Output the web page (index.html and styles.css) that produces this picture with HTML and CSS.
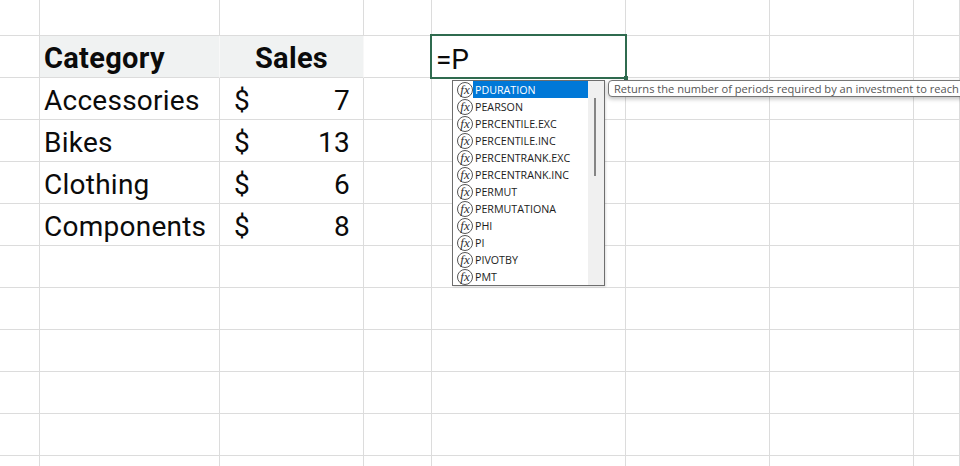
FILE: index.html
```html
<!DOCTYPE html>
<html lang="en">
<head>
<meta charset="utf-8">
<title>Sheet</title>
<link rel="stylesheet" href="styles.css">
</head>
<body>
<main class="sheet">
  <table class="grid">
    <colgroup>
      <col class="c-a"><col class="c-b"><col class="c-c"><col class="c-d"><col class="c-e"><col class="c-f"><col class="c-f"><col class="c-h">
    </colgroup>
    <tbody>
      <tr class="first"><td></td><td></td><td></td><td></td><td></td><td></td><td></td><td></td></tr>
      <tr><td></td><td class="head">Category</td><td class="head center">Sales</td><td></td><td></td><td></td><td></td><td></td></tr>
      <tr><td></td><td class="text">Accessories</td><td class="money"><div class="acct"><span>$</span><span>7</span></div></td><td></td><td></td><td></td><td></td><td></td></tr>
      <tr><td></td><td class="text">Bikes</td><td class="money"><div class="acct"><span>$</span><span>13</span></div></td><td></td><td></td><td></td><td></td><td></td></tr>
      <tr><td></td><td class="text">Clothing</td><td class="money"><div class="acct"><span>$</span><span>6</span></div></td><td></td><td></td><td></td><td></td><td></td></tr>
      <tr><td></td><td class="text">Components</td><td class="money"><div class="acct"><span>$</span><span>8</span></div></td><td></td><td></td><td></td><td></td><td></td></tr>
      <tr><td></td><td></td><td></td><td></td><td></td><td></td><td></td><td></td></tr>
      <tr><td></td><td></td><td></td><td></td><td></td><td></td><td></td><td></td></tr>
      <tr><td></td><td></td><td></td><td></td><td></td><td></td><td></td><td></td></tr>
      <tr><td></td><td></td><td></td><td></td><td></td><td></td><td></td><td></td></tr>
      <tr><td></td><td></td><td></td><td></td><td></td><td></td><td></td><td></td></tr>
      <tr><td></td><td></td><td></td><td></td><td></td><td></td><td></td><td></td></tr>
    </tbody>
  </table>

  <div class="editor">=P<span class="handle"></span></div>

  <div class="autocomplete">
    <ul class="fn-list">
      <li class="fn selected"><i class="fx">fx</i><span class="fn-name">PDURATION</span></li>
      <li class="fn"><i class="fx">fx</i><span class="fn-name">PEARSON</span></li>
      <li class="fn"><i class="fx">fx</i><span class="fn-name">PERCENTILE.EXC</span></li>
      <li class="fn"><i class="fx">fx</i><span class="fn-name">PERCENTILE.INC</span></li>
      <li class="fn"><i class="fx">fx</i><span class="fn-name">PERCENTRANK.EXC</span></li>
      <li class="fn"><i class="fx">fx</i><span class="fn-name">PERCENTRANK.INC</span></li>
      <li class="fn"><i class="fx">fx</i><span class="fn-name">PERMUT</span></li>
      <li class="fn"><i class="fx">fx</i><span class="fn-name">PERMUTATIONA</span></li>
      <li class="fn"><i class="fx">fx</i><span class="fn-name">PHI</span></li>
      <li class="fn"><i class="fx">fx</i><span class="fn-name">PI</span></li>
      <li class="fn"><i class="fx">fx</i><span class="fn-name">PIVOTBY</span></li>
      <li class="fn"><i class="fx">fx</i><span class="fn-name">PMT</span></li>
    </ul>
    <div class="scrollbar"><div class="thumb"></div></div>
  </div>

  <div class="tooltip">Returns the number of periods required by an investment to reach</div>
</main>
</body>
</html>
```
FILE: styles.css
```css
html, body {
  margin: 0;
  padding: 0;
  width: 960px;
  height: 466px;
  overflow: hidden;
  background: #fff;
}

.sheet {
  position: relative;
  width: 960px;
  height: 466px;
  overflow: hidden;
  font-family: Roboto, "Liberation Sans", sans-serif;
  color: #0b0b0b;
}

.grid {
  border-collapse: separate;
  border-spacing: 0;
  table-layout: fixed;
  width: 960px;
}

.c-a { width: 40px; }
.c-b { width: 180px; }
.c-c { width: 144px; }
.c-d { width: 68px; }
.c-e { width: 194px; }
.c-f { width: 144px; }
.c-h { width: 46px; }

tr { height: 42px; }
tr.first { height: 36px; }

td {
  box-sizing: border-box;
  padding: 0;
  border-right: 1px solid #dcdcdc;
  border-bottom: 1px solid #dcdcdc;
  font-size: 28px;
  line-height: 37px;
  white-space: nowrap;
  letter-spacing: .25px;
}

.head {
  background: #f0f2f2;
  border-right-color: #f8f8f8;
  font-size: 29px;
  font-weight: 700;
  letter-spacing: .3px;
  padding: 4px 0 0 4px;
}

.center {
  padding-left: 0;
  text-align: center;
}

.text { padding: 4px 0 0 4px; }

.money { padding: 4px 13px 0 14px; }

.acct {
  display: flex;
  justify-content: space-between;
}

.editor {
  position: absolute;
  left: 430px;
  top: 34px;
  box-sizing: border-box;
  width: 197px;
  height: 45px;
  padding-left: 4px;
  border: 2px solid #2f6b4f;
  background: #fff;
  font-size: 28px;
  line-height: 48px;
}

.handle {
  position: absolute;
  right: -3px;
  bottom: -3px;
  width: 4px;
  height: 4px;
  background: #2f6b4f;
}

.autocomplete {
  position: absolute;
  left: 452px;
  top: 80px;
  box-sizing: border-box;
  width: 153px;
  height: 206px;
  display: flex;
  background: #fff;
  border: 1px solid #6e6e6e;
  box-shadow: 1px 1px 2px rgba(0, 0, 0, .12);
}

.fn-list {
  flex: 1;
  margin: 0;
  padding: 0;
  list-style: none;
  overflow: hidden;
}

.fn {
  display: flex;
  align-items: center;
  height: 17px;
  padding-left: 4px;
}

.fx {
  flex: none;
  box-sizing: border-box;
  width: 16px;
  height: 16px;
  border: 1px solid #555;
  border-radius: 50%;
  font-family: "Liberation Serif", serif;
  font-size: 13px;
  line-height: 13px;
  text-align: center;
  color: #333;
}

.fn-name {
  flex: 1;
  height: 17px;
  padding-left: 2px;
  font-family: "Open Sans", "Noto Sans", sans-serif;
  font-size: 10.7px;
  line-height: 18px;
  color: #1c1c1c;
}

.selected .fn-name {
  background: #0078d7;
  color: #fff;
}

.scrollbar {
  flex: none;
  width: 16px;
  background: #f0f0f0;
  position: relative;
}

.thumb {
  position: absolute;
  left: 6px;
  top: 17px;
  width: 2px;
  height: 78px;
  background: #858585;
}

.tooltip {
  position: absolute;
  left: 608px;
  top: 80px;
  box-sizing: border-box;
  height: 17px;
  padding: 0 5px;
  border: 1px solid #767676;
  border-radius: 4px;
  background: #fff;
  box-shadow: 0 2px 4px rgba(0, 0, 0, .25);
  font-family: "Open Sans", "Noto Sans", sans-serif;
  font-size: 11.1px;
  line-height: 15px;
  color: #555;
  white-space: nowrap;
}
```
